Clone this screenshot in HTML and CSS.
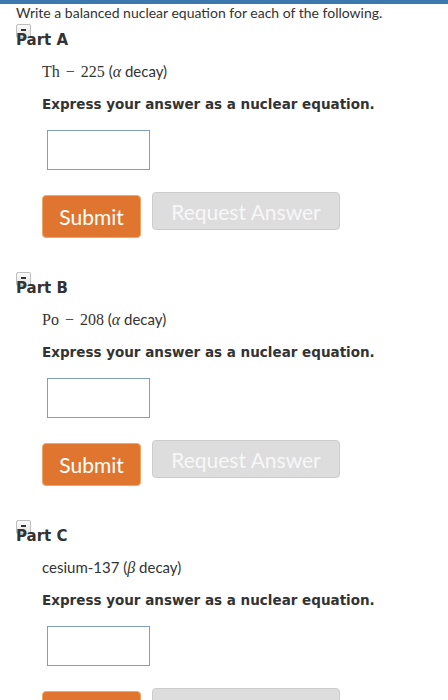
FILE: index.html
```html
<!DOCTYPE html>
<html lang="en">
<head>
    <meta charset="UTF-8">
    <meta name="viewport" content="width=device-width, initial-scale=1.0">
    <title>Nuclear Equations</title>
    <link rel="stylesheet" href="styles.css">
</head>
<body>

    <div class="top-bar"></div>

    <p class="intro">Write a balanced nuclear equation for each of the following.</p>

    <!-- Part A -->
    <section class="part">
        <h2 class="part-title"><span class="toggle"></span>Part A</h2>
        <div class="part-body">
            <p class="question"><span class="math">Th</span><span class="math op">&minus;</span><span class="math">225</span> (<span class="math greek">&alpha;</span> decay)</p>
            <p class="instruction">Express your answer as a nuclear equation.</p>
            <div class="answer-box"></div>
            <div class="actions">
                <button class="btn btn-submit">Submit</button>
                <button class="btn btn-request" disabled>Request Answer</button>
            </div>
        </div>
    </section>

    <!-- Part B -->
    <section class="part">
        <h2 class="part-title"><span class="toggle"></span>Part B</h2>
        <div class="part-body">
            <p class="question"><span class="math">Po</span><span class="math op">&minus;</span><span class="math">208</span> (<span class="math greek">&alpha;</span> decay)</p>
            <p class="instruction">Express your answer as a nuclear equation.</p>
            <div class="answer-box"></div>
            <div class="actions">
                <button class="btn btn-submit">Submit</button>
                <button class="btn btn-request" disabled>Request Answer</button>
            </div>
        </div>
    </section>

    <!-- Part C -->
    <section class="part">
        <h2 class="part-title"><span class="toggle"></span>Part C</h2>
        <div class="part-body">
            <p class="question">cesium-137 (<span class="math greek">&beta;</span> decay)</p>
            <p class="instruction">Express your answer as a nuclear equation.</p>
            <div class="answer-box"></div>
            <div class="actions">
                <button class="btn btn-submit">Submit</button>
                <button class="btn btn-request" disabled>Request Answer</button>
            </div>
        </div>
    </section>

</body>
</html>
```

FILE: styles.css
```css
/* --- base --- */
:root {
    --text-color: #333333;
    --bar-blue: #3a78ad;
    --orange: #e0752f;
    --gray-btn: #dddddd;
    --input-border: #7f9fbb;
}

body {
    margin: 0;
    font-family: Lato, "Open Sans", sans-serif;
    color: var(--text-color);
    background: #ffffff;
}

.top-bar {
    height: 4px;
    background-color: var(--bar-blue);
}

.intro {
    margin: 0 0 0 16px;
    font-size: 14px;
    line-height: 18px;
}

/* --- parts --- */
.part {
    padding-left: 16px;
}

.part + .part {
    margin-top: 41px;
}

.part-title {
    position: relative;
    margin: 9px 0 0;
    font-family: "DejaVu Sans", sans-serif;
    font-size: 15px;
    font-weight: 700;
    line-height: 18px;
}

/* collapse toggle, tucked behind the title text */
.toggle {
    position: absolute;
    z-index: -1;
    left: 0;
    top: -7px;
    width: 13px;
    height: 12px;
    border: 1px solid #bdbdbd;
    border-radius: 2px;
    background: linear-gradient(#fafafa, #e6e6e6);
}

/* the little minus bar */
.toggle::before {
    content: "";
    position: absolute;
    left: 4px;
    top: 4px;
    width: 5px;
    height: 1.5px;
    background: #333;
}

.part-body {
    padding-left: 26px;
}

.question {
    margin: 13px 0 0;
    font-size: 15px;
    line-height: 18px;
}

.math {
    font-family: "Liberation Serif", "DejaVu Serif", serif;
    font-size: 16px;
}

.math.op {
    margin: 0 6px;
}

.greek {
    font-style: italic;
}

.instruction {
    margin: 14px 0 0;
    font-family: "DejaVu Sans", sans-serif;
    font-size: 13.5px;
    font-weight: 700;
    line-height: 18px;
}

.answer-box {
    width: 101px;
    height: 38px;
    margin: 17px 0 0 5px;
    border: 1.5px solid var(--input-border);
}

/* --- buttons --- */
.actions {
    display: flex;
    align-items: flex-start;
    gap: 11px;
    margin-top: 22px;
}

.btn {
    font-family: Lato, "Open Sans", sans-serif;
    font-size: 21px;
    border-radius: 4px;
    padding: 0;
    cursor: pointer;
}

.btn-submit {
    width: 99px;
    height: 43px;
    margin-top: 3px;
    background-color: var(--orange);
    border: 1px solid #f0a565;
    color: #ffffff;
}

.btn-request {
    width: 188px;
    height: 38px;
    background-color: var(--gray-btn);
    border: 1px solid #cccccc;
    color: #f7f7f7;
}
```
